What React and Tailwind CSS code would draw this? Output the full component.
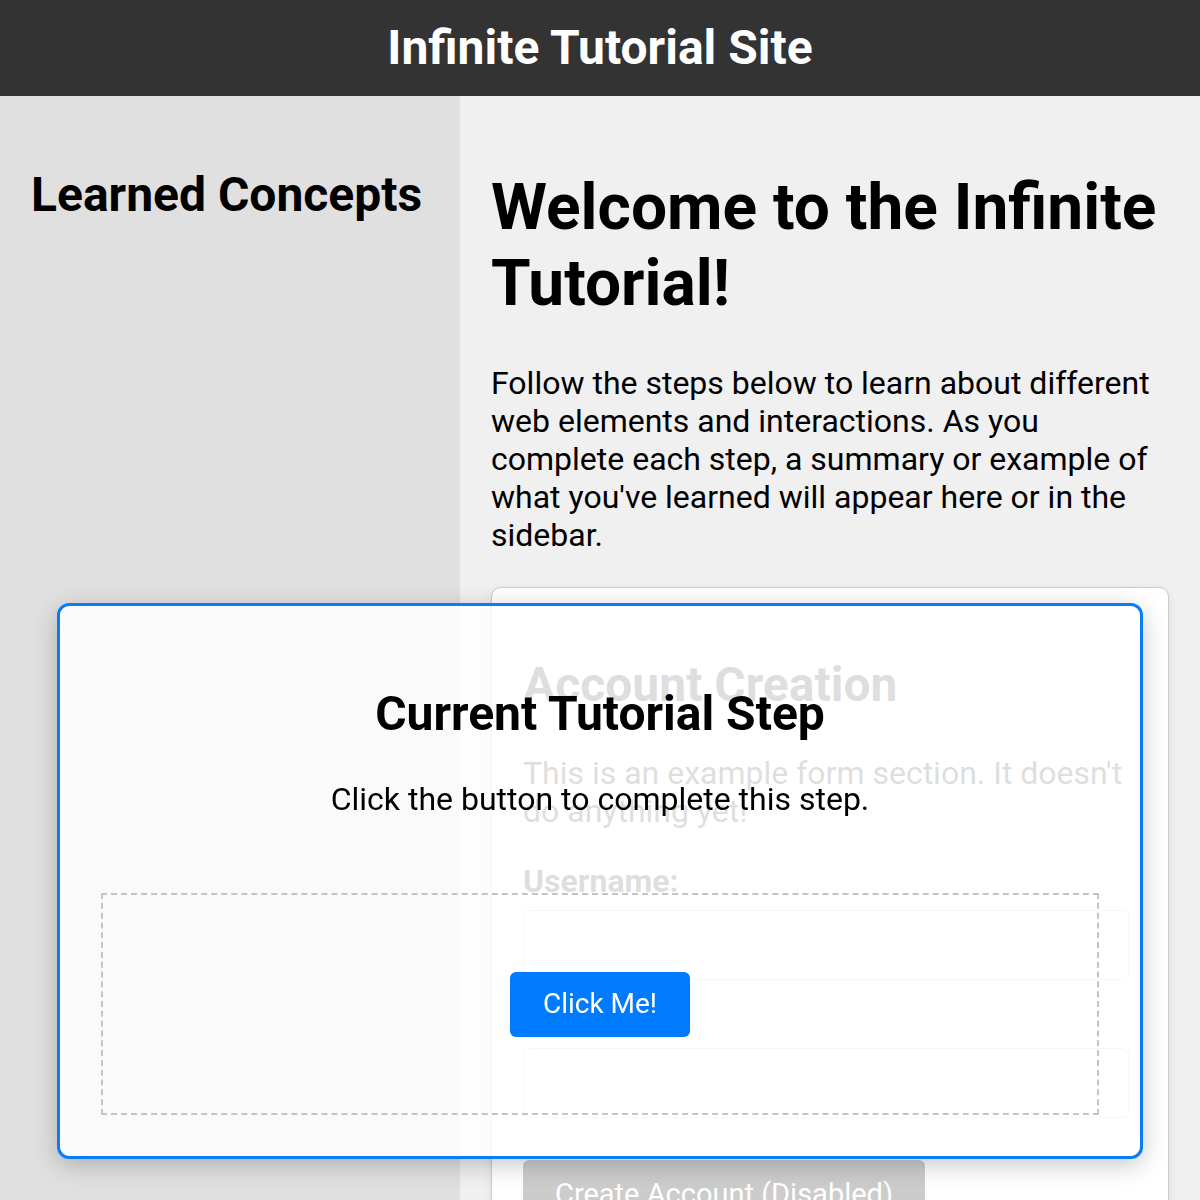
import React from "react";

export default function App() {
  return (
    <div className="min-h-screen flex flex-col font-['Roboto',sans-serif] text-black">
      <header className="h-[96px] bg-[#333333] flex items-center justify-center shrink-0">
        <h1 className="text-white font-bold text-[48px] leading-none">Infinite Tutorial Site</h1>
      </header>
      <div className="flex flex-1">
        <aside className="w-[460px] shrink-0 bg-[#e0e0e0] px-[31px] pt-[69px]">
          <h2 className="font-bold text-[48px] leading-[60px]">Learned Concepts</h2>
        </aside>
        <main className="flex-1 bg-[#f0f0f0] px-[31px] pt-[74px] pb-10">
          <h1 className="font-bold text-[64px] leading-[76px]">Welcome to the Infinite Tutorial!</h1>
          <p className="mt-[42px] text-[32px] leading-[38px]">
            Follow the steps below to learn about different web elements and interactions. As you complete each step, a summary or example of what you've learned will appear here or in the sidebar.
          </p>
          <section className="mt-[33px] bg-white border border-[#cccccc] rounded-[10px] shadow-[0_2px_8px_rgba(0,0,0,0.08)] px-[31px] pt-[69px] pb-[40px]">
            <h2 className="font-bold text-[48px] leading-[56px] text-[#333333]">Account Creation</h2>
            <p className="mt-[41px] text-[32px] leading-[38px] text-[#333333]">
              This is an example form section. It doesn't do anything yet!
            </p>
            <label className="block mt-[32px] font-bold text-[32px] leading-[38px] text-[#333333]">Username:</label>
            <div className="mt-[10px] h-[70px] border border-[#cccccc] rounded-[6px] mr-[8px]"></div>
            <label className="block mt-[20px] font-bold text-[32px] leading-[38px] text-[#333333]">Password:</label>
            <div className="mt-[10px] h-[70px] border border-[#cccccc] rounded-[6px] mr-[8px]"></div>
            <button className="mt-[42px] h-[70px] px-[32px] rounded-[6px] bg-[#cccccc] text-white text-[29px]">Create Account (Disabled)</button>
          </section>
        </main>
      </div>
      <div className="fixed left-[57px] top-[603px] w-[1086px] h-[556px] border-[3px] border-[#0a7cf7] rounded-[12px] bg-[rgba(255,255,255,0.84)] shadow-[0_6px_24px_rgba(0,0,0,0.22)] flex flex-col items-center px-[41px]">
        <h2 className="mt-[80px] font-bold text-[48px] leading-[56px]">Current Tutorial Step</h2>
        <p className="mt-[38px] text-[32px] leading-[38px]">Click the button to complete this step.</p>
        <div className="mt-[75px] w-full h-[222px] border-2 border-dashed border-[#c4c4c4] flex items-center justify-center">
          <button className="w-[180px] h-[65px] rounded-[6px] bg-[#007bff] text-white text-[28px]">Click Me!</button>
        </div>
      </div>
    </div>
  );
}
